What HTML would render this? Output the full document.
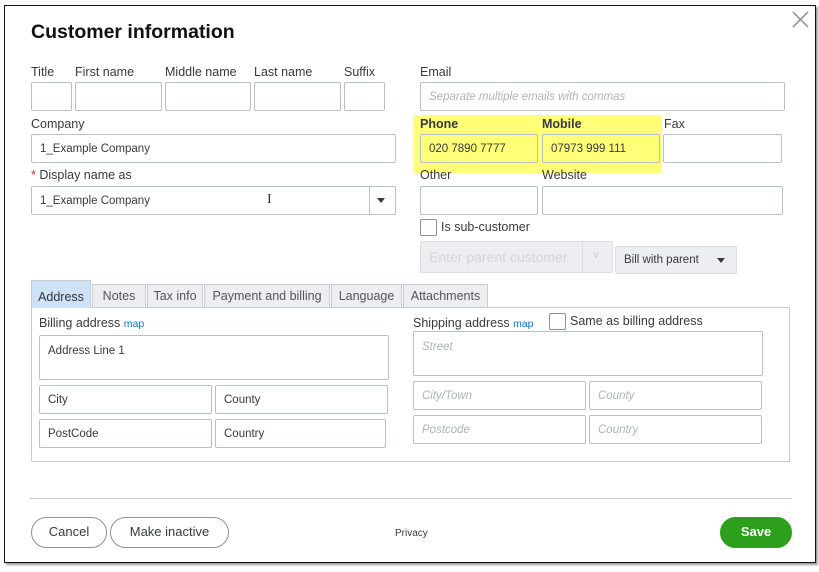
<!DOCTYPE html>
<html><head><meta charset="utf-8"><style>
*{box-sizing:border-box;margin:0;padding:0}
body{width:819px;height:572px;background:#fff;position:relative;overflow:hidden;font-family:"Liberation Sans",sans-serif;color:#393a3d}
.a{position:absolute}
.lbl{position:absolute;font-size:12.5px;color:#393a3d}
.in{position:absolute;border:1px solid #babec5;border-radius:2px;background:#fff;font-size:11.5px;color:#393a3d;padding-left:8px;display:flex;align-items:center}
.ph{color:#b0b3b8;font-style:italic}
.tab{position:absolute;top:284px;height:23px;border:1px solid #c9ccd0;border-bottom:none;background:#eceef1;font-size:12.5px;color:#555;text-align:center;line-height:22px}
.btn{position:absolute;border:1px solid #8d9096;border-radius:16px;font-size:13px;text-align:center;line-height:28px;color:#393a3d}
.map{color:#0077c5;font-size:10.5px}
.cb{position:absolute;width:17px;height:17px;border:1px solid #8d9096;border-radius:2px;background:#fff}
</style></head><body>
<div class="a" style="left:4px;top:5px;width:812px;height:558px;border:1.5px solid #111;box-shadow:2px 2px 2px #999"></div>
<div class="a" style="left:31px;top:21px;font-size:19.5px;font-weight:bold;color:#111">Customer information</div>
<svg class="a" style="left:792px;top:11px" width="17" height="17"><path d="M1 1L16 16M16 1L1 16" stroke="#9a9da3" stroke-width="1.8"/></svg>

<div class="lbl" style="left:31px;top:65px">Title</div>
<div class="lbl" style="left:75px;top:65px">First name</div>
<div class="lbl" style="left:165px;top:65px">Middle name</div>
<div class="lbl" style="left:254px;top:65px">Last name</div>
<div class="lbl" style="left:344px;top:65px">Suffix</div>
<div class="in" style="left:31px;top:82px;width:41px;height:29px"></div>
<div class="in" style="left:75px;top:82px;width:87px;height:29px"></div>
<div class="in" style="left:165px;top:82px;width:86px;height:29px"></div>
<div class="in" style="left:254px;top:82px;width:87px;height:29px"></div>
<div class="in" style="left:344px;top:82px;width:41px;height:29px"></div>

<div class="lbl" style="left:31px;top:117px">Company</div>
<div class="in" style="left:31px;top:134px;width:365px;height:29px">1_Example Company</div>
<div class="lbl" style="left:31px;top:168px"><span style="color:#d52b1e">*</span> Display name as</div>
<div class="in" style="left:31px;top:186px;width:365px;height:29px">1_Example Company</div>
<div class="a" style="left:369px;top:187px;width:1px;height:27px;background:#babec5"></div>
<div class="a" style="left:377px;top:198px;border-left:4px solid transparent;border-right:4px solid transparent;border-top:5px solid #393a3d"></div>
<div class="a" style="left:267px;top:192px;font-size:14px;color:#333;font-family:'Liberation Serif',serif">I</div>

<div class="lbl" style="left:420px;top:65px">Email</div>
<div class="in ph" style="left:420px;top:82px;width:365px;height:29px">Separate multiple emails with commas</div>
<div class="a" style="left:413px;top:115px;width:249px;height:58px;background:#ffff78"></div>
<div class="lbl" style="left:420px;top:117px;font-weight:bold">Phone</div>
<div class="lbl" style="left:542px;top:117px;font-weight:bold">Mobile</div>
<div class="lbl" style="left:664px;top:117px">Fax</div>
<div class="in" style="left:420px;top:134px;width:118px;height:29px;background:transparent">020 7890 7777</div>
<div class="in" style="left:542px;top:134px;width:118px;height:29px;background:transparent">07973 999 111</div>
<div class="in" style="left:663px;top:134px;width:119px;height:29px"></div>
<div class="lbl" style="left:420px;top:168px">Other</div>
<div class="lbl" style="left:542px;top:168px">Website</div>
<div class="in" style="left:420px;top:186px;width:118px;height:29px"></div>
<div class="in" style="left:542px;top:186px;width:241px;height:29px"></div>
<div class="cb" style="left:420px;top:219px"></div>
<div class="lbl" style="left:441px;top:220px">Is sub-customer</div>
<div class="in" style="left:420px;top:241px;width:193px;height:32px;background:#eceef1;border-color:#dcdee2;color:#d3d5d9;font-size:14px">Enter parent customer</div>
<div class="a" style="left:582px;top:242px;width:1px;height:30px;background:#dcdee2"></div>
<div class="a" style="left:592px;top:250px;color:#ccc;font-size:10px">&#8744;</div>
<div class="in" style="left:615px;top:246px;width:122px;height:28px;background:#eceef1;border-color:#dcdee2">Bill with parent</div>
<div class="a" style="left:717px;top:258px;border-left:4px solid transparent;border-right:4px solid transparent;border-top:5px solid #393a3d"></div>

<div class="a" style="left:31px;top:307px;width:759px;height:155px;border:1px solid #c9ccd0"></div>
<div class="tab" style="left:31px;top:280px;height:28px;width:60px;background:#cfe3f8;color:#333;line-height:32px">Address</div>
<div class="tab" style="left:92px;width:54px">Notes</div>
<div class="tab" style="left:147px;width:56px">Tax info</div>
<div class="tab" style="left:204px;width:126px">Payment and billing</div>
<div class="tab" style="left:331px;width:71px">Language</div>
<div class="tab" style="left:403px;width:85px">Attachments</div>

<div class="lbl" style="left:39px;top:316px">Billing address <span class="map">map</span></div>
<div class="in" style="left:39px;top:335px;width:350px;height:45px;align-items:flex-start;padding-top:9px">Address Line 1</div>
<div class="in" style="left:39px;top:385px;width:173px;height:29px">City</div>
<div class="in" style="left:215px;top:385px;width:173px;height:29px">County</div>
<div class="in" style="left:39px;top:419px;width:173px;height:29px">PostCode</div>
<div class="in" style="left:215px;top:419px;width:171px;height:29px">Country</div>

<div class="lbl" style="left:413px;top:316px">Shipping address <span class="map">map</span></div>
<div class="cb" style="left:549px;top:313px"></div>
<div class="lbl" style="left:570px;top:314px">Same as billing address</div>
<div class="in ph" style="left:413px;top:331px;width:350px;height:45px;align-items:flex-start;padding-top:9px">Street</div>
<div class="in ph" style="left:413px;top:381px;width:173px;height:29px">City/Town</div>
<div class="in ph" style="left:589px;top:381px;width:173px;height:29px">County</div>
<div class="in ph" style="left:413px;top:415px;width:173px;height:29px">Postcode</div>
<div class="in ph" style="left:589px;top:415px;width:173px;height:29px">Country</div>

<div class="a" style="left:30px;top:498px;width:762px;height:1px;background:#c9ccd0"></div>
<div class="btn" style="left:31px;top:517px;width:76px;height:31px">Cancel</div>
<div class="btn" style="left:110px;top:517px;width:119px;height:31px">Make inactive</div>
<div class="a" style="left:395px;top:528px;font-size:10px">Privacy</div>
<div class="btn" style="left:720px;top:517px;width:72px;height:31px;background:#2ca01c;border-color:#2ca01c;color:#fff;font-weight:bold">Save</div>
</body></html>
